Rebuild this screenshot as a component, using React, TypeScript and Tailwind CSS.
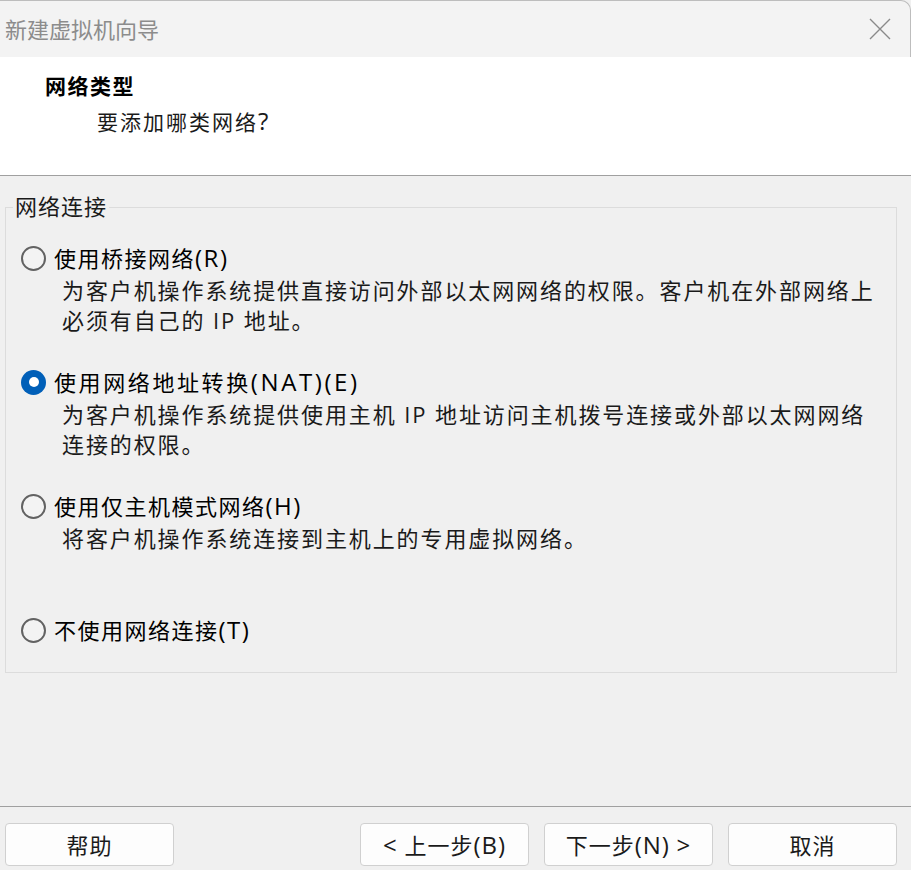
import React from 'react';

const FONT = { fontFamily: '"Open Sans", "Noto Sans CJK SC", "Noto Sans", sans-serif' };

// Windows renders the Latin runs a little larger than the CJK glyphs
function Mixed({ text }: { text: string }) {
  const parts = text.split(/([A-Za-z()?<>]+)/);
  return (
    <>
      {parts.map((p, i) =>
        /[A-Za-z()?<>]/.test(p) ? (
          <span key={i} className="text-[24px]">
            {p}
          </span>
        ) : (
          <React.Fragment key={i}>{p}</React.Fragment>
        )
      )}
    </>
  );
}

function Radio({ checked }: { checked?: boolean }) {
  if (checked) {
    return (
      <span className="flex h-[25px] w-[25px] shrink-0 items-center justify-center rounded-full bg-[#005fb8]">
        <span className="h-[10px] w-[10px] rounded-full bg-white" />
      </span>
    );
  }
  return <span className="h-[25px] w-[25px] shrink-0 rounded-full border-2 border-[#626262] bg-[#f3f3f3]" />;
}

interface OptionProps {
  label: string;
  lines?: string[];
  checked?: boolean;
  wide?: boolean;
}

function Option({ label, lines = [], checked, wide }: OptionProps) {
  return (
    <div className="flex flex-col">
      <div className="flex h-[34px] items-center gap-[8px] pl-[15px]">
        <Radio checked={checked} />
        <span className={`text-[22px] leading-[34px] text-black ${wide ? 'tracking-[2.6px]' : 'tracking-[1.5px]'}`}>
          <Mixed text={label} />
        </span>
      </div>
      {lines.map((line) => (
        <div key={line} className="h-[30px] pl-[56px] text-[22px] leading-[30px] tracking-[1.9px] text-[#1a1a1a]">
          {line}
        </div>
      ))}
    </div>
  );
}

function Button({ children }: { children: string }) {
  return (
    <button className="flex h-[43px] w-[169px] items-center justify-center rounded-[4px] border border-[#d0d0d0] bg-[#fdfdfd] text-[22px] leading-[30px] tracking-[1px] text-[#1a1a1a]">
      <span>
        <Mixed text={children} />
      </span>
    </button>
  );
}

export default function App() {
  return (
    <div className="flex h-[870px] w-[911px] flex-col overflow-hidden bg-[#f0f0f0]" style={FONT}>
      {/* Title bar */}
      <div className="flex h-[57px] shrink-0 items-center justify-between rounded-tr-[10px] border-t border-r border-[#bdbdbd] bg-[#f3f3f3] pl-[5px] pr-[19px]">
        <span className="text-[22px] text-[#8c8c8c]">新建虚拟机向导</span>
        <svg width="22" height="22" viewBox="0 0 22 22" fill="none" stroke="#8a8a8a" strokeWidth="1.4">
          <path d="M1 1L21 21M21 1L1 21" />
        </svg>
      </div>

      {/* Header */}
      <div className="h-[119px] shrink-0 border-b border-[#a0a0a0] bg-white pt-[13px]">
        <div className="pl-[45px] text-[21px] font-bold leading-[32px] tracking-[1.5px] text-black">网络类型</div>
        <div className="pl-[97px] pt-[4px] text-[21px] leading-[30px] tracking-[2px] text-[#1a1a1a]">
          <Mixed text="要添加哪类网络?" />
        </div>
      </div>

      {/* Body */}
      <div className="flex-1 px-[5px] pt-[31px]">
        <div className="relative h-[466px] w-[892px] border border-[#dcdcdc]">
          <span className="absolute left-[7px] top-[-17px] bg-[#f0f0f0] px-[2px] text-[22px] leading-[30px] tracking-[1px] text-[#1a1a1a]">
            网络连接
          </span>
          <div className="flex flex-col pt-[33px]">
            <Option
              label="使用桥接网络(R)"
              lines={['为客户机操作系统提供直接访问外部以太网网络的权限。客户机在外部网络上', '必须有自己的 IP 地址。']}
            />
            <div className="h-[30px]" />
            <Option
              checked
              wide
              label="使用网络地址转换(NAT)(E)"
              lines={['为客户机操作系统提供使用主机 IP 地址访问主机拨号连接或外部以太网网络', '连接的权限。']}
            />
            <div className="h-[30px]" />
            <Option label="使用仅主机模式网络(H)" lines={['将客户机操作系统连接到主机上的专用虚拟网络。']} />
            <div className="h-[60px]" />
            <Option label="不使用网络连接(T)" />
          </div>
        </div>
      </div>

      {/* Footer */}
      <div className="h-[64px] shrink-0 border-t border-[#a0a0a0] pt-[16px]">
        <div className="flex items-center px-[5px]">
          <Button>帮助</Button>
          <div className="flex-1" />
          <div className="flex gap-[15px] pr-[9px]">
            <Button>{'< 上一步(B)'}</Button>
            <Button>{'下一步(N) >'}</Button>
            <Button>取消</Button>
          </div>
        </div>
      </div>
    </div>
  );
}
